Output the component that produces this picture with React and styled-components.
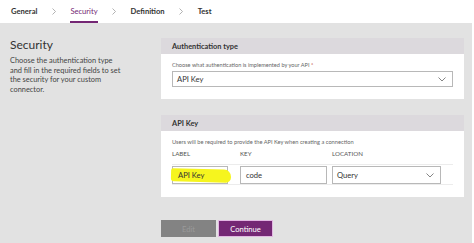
import styled, { createGlobalStyle } from 'styled-components';

const Global = createGlobalStyle`
  html, body {
    margin: 0;
    padding: 0;
    background: #ffffff;
    font-family: Lato, "Open Sans", sans-serif;
    color: #333333;
  }
`;

const Page = styled.div`
  width: 474px;
  height: 243px;
  display: flex;
  flex-direction: column;
  overflow: hidden;
`;

const Tabs = styled.div`
  height: 23px;
  display: flex;
  align-items: stretch;
  padding-left: 11px;
  background: #ffffff;
`;

const Tab = styled.div`
  display: flex;
  align-items: center;
  font-size: 7.6px;
  font-weight: ${(p) => (p.$active ? 400 : 700)};
  color: ${(p) => (p.$active ? '#742774' : '#333333')};
  border-bottom: 2px solid ${(p) => (p.$active ? '#742774' : 'transparent')};
  box-sizing: border-box;
  padding-top: 1px;
`;

const Sep = styled.div`
  display: flex;
  align-items: center;
  justify-content: center;
  width: 33px;
  padding-bottom: 1px;
`;

const Main = styled.div`
  flex: 1;
  display: flex;
  background: #e2e2e2;
  margin-right: 2px;
`;

const Side = styled.div`
  width: 161px;
  flex-shrink: 0;
  padding: 14px 0 0 10px;
  box-sizing: border-box;
`;

const SideTitle = styled.div`
  font-size: 12px;
  color: #333;
  margin-bottom: 4px;
`;

const SideText = styled.div`
  font-size: 7.4px;
  line-height: 9.5px;
  color: #444;
  white-space: nowrap;
`;

const Content = styled.div`
  width: 303px;
  flex-shrink: 0;
  padding-top: 15px;
  display: flex;
  flex-direction: column;
  gap: 16px;
`;

const Card = styled.div`
  background: #ffffff;
`;

const CardHead = styled.div`
  height: 16px;
  background: #dcd9dd;
  display: flex;
  align-items: center;
  padding-left: 11px;
  font-size: 7.4px;
  font-weight: 700;
  color: #333;
`;

const CardBody = styled.div`
  padding: 6px 11px 12px;
`;

const Hint = styled.div`
  font-size: ${(p) => p.$fs || '5.6px'};
  color: #666;
  line-height: 9px;
  margin-bottom: ${(p) => p.$mb || '2px'};
`;

const Req = styled.span`
  color: #c0392b;
`;

const Select = styled.div`
  height: ${(p) => p.$h || 16}px;
  width: ${(p) => p.$w || 281}px;
  box-sizing: border-box;
  border: 1px solid #b8b8b8;
  display: flex;
  align-items: center;
  justify-content: space-between;
  padding: 0 6px 0 4px;
  font-size: 7.6px;
  color: #333;
  background: #fff;
`;

const Cols = styled.div`
  display: flex;
  font-size: 6.2px;
  color: #555;
  height: 11px;
  align-items: center;
`;

const Col = styled.div`
  width: ${(p) => p.$w}px;
`;

const Row = styled.div`
  width: 281px;
  border-top: 1px solid #ececec;
  border-bottom: 1px solid #ececec;
  margin-top: 5px;
  padding: 1px 0 0;
  display: flex;
  align-items: center;
`;

const Field = styled.div`
  position: relative;
  height: 18px;
  width: ${(p) => p.$w}px;
  margin-right: ${(p) => p.$mr || 0}px;
  box-sizing: border-box;
  border: 1px solid #b8b8b8;
  display: flex;
  align-items: center;
  padding-left: 5px;
  font-size: 7.6px;
  color: #333;
  background: #fff;
`;

const Marker = styled.span`
  position: absolute;
  left: -2px;
  top: 2px;
  width: 60px;
  height: 13px;
  background: #f6f51e;
  border-radius: 2px 7px 5px 3px;
  transform: rotate(1.5deg);
`;

const FieldText = styled.span`
  position: relative;
`;

const Buttons = styled.div`
  display: flex;
  gap: 2px;
  margin-top: 7px;
`;

const Button = styled.div`
  width: 55px;
  height: 17px;
  box-sizing: border-box;
  display: flex;
  align-items: center;
  justify-content: center;
  font-size: 7.6px;
  color: ${(p) => (p.$primary ? '#ffffff' : '#9a9a9a')};
  background: ${(p) => (p.$primary ? '#742774' : '#838383')};
  border: 1px solid ${(p) => (p.$primary ? '#e2b8e2' : '#838383')};
`;

function Chevron() {
  return (
    <svg width="8" height="5" viewBox="0 0 8 5">
      <path d="M0.5 0.5 L4 4 L7.5 0.5" fill="none" stroke="#777" strokeWidth="0.9" />
    </svg>
  );
}

function Arrow() {
  return (
    <svg width="4" height="7" viewBox="0 0 4 7">
      <path d="M0.5 0.5 L3.5 3.5 L0.5 6.5" fill="none" stroke="#a0a0a0" strokeWidth="0.8" />
    </svg>
  );
}

export default function App() {
  return (
    <Page>
      <Global />
      <Tabs>
        <Tab>General</Tab>
        <Sep><Arrow /></Sep>
        <Tab $active>Security</Tab>
        <Sep><Arrow /></Sep>
        <Tab>Definition</Tab>
        <Sep><Arrow /></Sep>
        <Tab>Test</Tab>
      </Tabs>
      <Main>
        <Side>
          <SideTitle>Security</SideTitle>
          <SideText>
            Choose the authentication type
            <br />
            and fill in the required fields to set
            <br />
            the security for your custom
            <br />
            connector.
          </SideText>
        </Side>
        <Content>
          <Card>
            <CardHead>Authentication type</CardHead>
            <CardBody>
              <Hint>
                Choose what authentication is implemented by your API <Req>*</Req>
              </Hint>
              <Select>
                API Key
                <Chevron />
              </Select>
            </CardBody>
          </Card>
          <Card>
            <CardHead>API Key</CardHead>
            <CardBody>
              <Hint $fs="5.7px" $mb="2px">
                Users will be required to provide the API Key when creating a connection
              </Hint>
              <Cols>
                <Col $w={68}>LABEL</Col>
                <Col $w={92}>KEY</Col>
                <Col $w={100}>LOCATION</Col>
              </Cols>
              <Row>
                <Field $w={56} $mr={12}>
                  <Marker />
                  <FieldText>API Key</FieldText>
                </Field>
                <Field $w={87} $mr={5}>code</Field>
                <Select $w={109} $h={18}>
                  Query
                  <Chevron />
                </Select>
              </Row>
            </CardBody>
          </Card>
          <Buttons>
            <Button>Edit</Button>
            <Button $primary>Continue</Button>
          </Buttons>
        </Content>
      </Main>
    </Page>
  );
}
